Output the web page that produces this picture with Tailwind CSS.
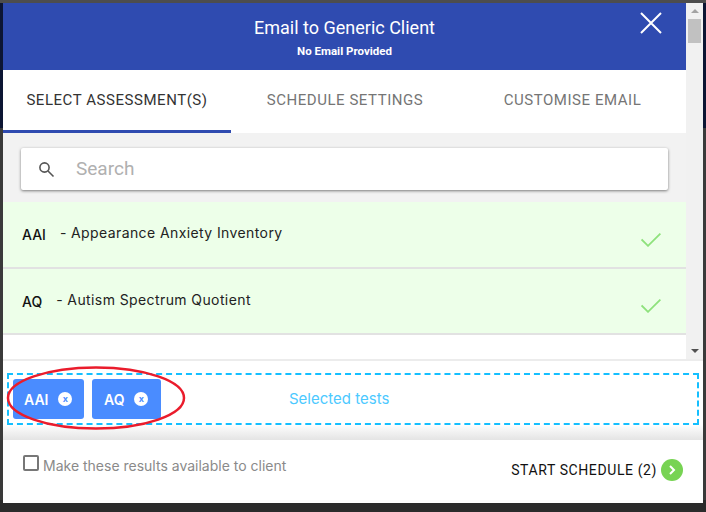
<!DOCTYPE html>
<html lang="en">
<head>
    <meta charset="UTF-8">
    <meta name="viewport" content="width=device-width, initial-scale=1.0">
    <title>Email to Generic Client</title>
    <script src="https://cdn.jsdelivr.net/npm/@tailwindcss/browser@4"></script>
</head>
<body class="bg-[linear-gradient(to_bottom,#4d4d4d_3px,#0c1533_3px,#0c1533_128px,#3a3a3a_128px,#3a3a3a_500px,#2b2b2b_500px)] w-[706px] h-[512px] overflow-hidden font-['Roboto',sans-serif]">
    <div class="h-[3px]"></div>
    <div class="ml-[3px] w-[700px] h-[500px] bg-white flex flex-col relative">
        <!-- scrolling part -->
        <div class="h-[356px] flex shrink-0">
            <div class="w-[683px] flex flex-col">
                <div class="h-[67px] bg-[#2f4bb0] text-white flex flex-col items-center relative">
                    <h1 class="text-[18px] leading-[20px] mt-[15px]">Email to Generic Client</h1>
                    <p class="text-[11.5px] leading-[14px] mt-[6px] font-bold">No Email Provided</p>
                    <button class="absolute top-[9px] right-[24px]">
                        <svg width="22" height="22" viewBox="0 0 22 22" fill="none" stroke="white" stroke-width="2"><path d="M1 1 L21 21 M21 1 L1 21"/></svg>
                    </button>
                </div>
                <div class="h-[63px] flex text-[15px] tracking-[0.55px] text-[#757575]">
                    <div class="w-[228px] h-full flex items-center justify-center border-b-[3px] border-[#2f4bb0] text-[#333] pt-[1px]">SELECT ASSESSMENT(S)</div>
                    <div class="w-[228px] flex items-center justify-center pb-[3px]">SCHEDULE SETTINGS</div>
                    <div class="w-[227px] flex items-center justify-center pb-[3px]">CUSTOMISE EMAIL</div>
                </div>
                <div class="bg-[#f2f2f2] pt-[15px] pb-[12px] pl-[18px] pr-[18px]">
                    <div class="h-[42px] bg-white rounded-[2px] shadow-[0_1px_3px_rgba(0,0,0,0.5)] flex items-center">
                        <svg class="ml-[17px]" width="17" height="17" viewBox="0 0 17 17" fill="none" stroke="#555" stroke-width="1.6"><circle cx="6.5" cy="6.5" r="4.6"/><path d="M10 10 L15.5 15.5"/></svg>
                        <span class="ml-[21px] text-[19px] leading-[24px] text-[#b0b0b0]">Search</span>
                    </div>
                </div>
                <div class="h-[67px] bg-[#edffe9] border-b-2 border-[#e2e2e2] flex items-center font-['Inter',sans-serif] text-[14px] tracking-[0.4px] text-[#222] pl-[19px] pr-[25px]">
                    <span class="font-medium text-[#111] tracking-normal -mt-[1px]">AAI</span>
                    <span class="ml-[14px] -mt-[4px] flex-1">- Appearance Anxiety Inventory</span>
                    <svg class="mt-[10px]" width="20" height="14" viewBox="0 0 20 14" fill="none" stroke="#8ee27c" stroke-width="1.8"><path d="M0.6 6.5 L7 12.8 L19.4 0.6"/></svg>
                </div>
                <div class="h-[66px] bg-[#edffe9] border-b-2 border-[#e2e2e2] flex items-center font-['Inter',sans-serif] text-[14px] tracking-[0.4px] text-[#222] pl-[19px] pr-[25px]">
                    <span class="font-medium text-[#111] tracking-normal">AQ</span>
                    <span class="ml-[14px] -mt-[3px] flex-1">- Autism Spectrum Quotient</span>
                    <svg class="mt-[10px]" width="20" height="14" viewBox="0 0 20 14" fill="none" stroke="#8ee27c" stroke-width="1.8"><path d="M0.6 6.5 L7 12.8 L19.4 0.6"/></svg>
                </div>
                <div class="flex-1 bg-white"></div>
            </div>
            <!-- scrollbar -->
            <div class="w-[17px] bg-[#f1f1f1] flex flex-col items-center">
                <div class="mt-[6px] w-0 h-0 border-x-[4px] border-x-transparent border-b-[4px] border-b-[#a3a3a3]"></div>
                <div class="mt-[6px] w-[13px] h-[24px] bg-[#c1c1c1]"></div>
                <div class="mt-auto mb-[6px] w-0 h-0 border-x-[4px] border-x-transparent border-t-[4px] border-t-[#505050]"></div>
            </div>
        </div>
        <!-- selected tests -->
        <div class="h-[81px] shrink-0 border-t-2 border-[#ececec] bg-gradient-to-b from-white from-80% to-[#e4e4e4] pt-[12px] pl-[4px] pr-[4px]">
            <div class="relative h-[52px] border-2 border-dashed border-[#14bfff] flex items-center pl-[4px] font-['Inter',sans-serif]">
                <div class="h-[40px] w-[71px] bg-[#4a8cff] rounded-[3px] flex items-center pl-[11px] text-white text-[14px] font-semibold">
                    <span>AAI</span>
                    <span class="ml-[10px] w-[14px] h-[14px] rounded-full bg-white text-[#4a8cff] text-[9px] leading-[14px] text-center font-bold">x</span>
                </div>
                <div class="ml-[8px] h-[40px] w-[69px] bg-[#4a8cff] rounded-[3px] flex items-center pl-[12px] text-white text-[14px] font-semibold">
                    <span>AQ</span>
                    <span class="ml-[10px] w-[14px] h-[14px] rounded-full bg-white text-[#4a8cff] text-[9px] leading-[14px] text-center font-bold">x</span>
                </div>
                <span class="absolute left-[280px] top-[14px] text-[15px] leading-[20px] text-[#4cc9ff]">Selected tests</span>
            </div>
        </div>
        <!-- footer -->
        <div class="flex-1 flex items-center font-['Inter',sans-serif] pb-[4px]">
            <div class="ml-[20px] w-[16px] h-[16px] border-2 border-[#777] rounded-[2px] -mt-[14px]"></div>
            <span class="ml-[4px] -mt-[8px] text-[14px] text-[#8a8a8a]">Make these results available to client</span>
            <span class="ml-auto mt-[2px] text-[14px] text-[#111] font-['Roboto',sans-serif] tracking-[0.6px]">START SCHEDULE (2)</span>
            <span class="ml-[4px] mr-[20px] w-[22px] h-[22px] rounded-full bg-[#77d353] flex items-center justify-center">
                <svg width="8" height="10" viewBox="0 0 8 10" fill="none" stroke="white" stroke-width="2"><path d="M2 1 L6 5 L2 9"/></svg>
            </span>
        </div>
        <!-- hand drawn annotation -->
        <svg class="absolute left-[1px] top-[361px]" width="184" height="68" viewBox="0 0 184 68" fill="none" stroke="#ea1c2c" stroke-width="2.5"><ellipse cx="92" cy="34" rx="88" ry="30.5"/></svg>
    </div>
</body>
</html>
